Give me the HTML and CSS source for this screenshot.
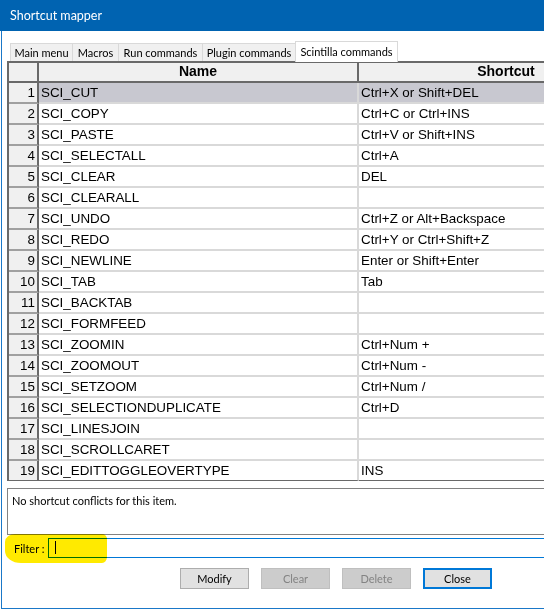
FILE: index.html
```html
<!DOCTYPE html>
<html>
<head>
<meta charset="utf-8">
<link rel="stylesheet" href="styles.css">
</head>
<body>
<div class="window">
  <div class="titlebar">Shortcut mapper</div>
  <div class="client">
    <div class="tabs">
      <div class="tab t1">Main menu</div>
      <div class="tab t2">Macros</div>
      <div class="tab t3">Run commands</div>
      <div class="tab t4">Plugin commands</div>
      <div class="tab t5 active">Scintilla commands</div>
    </div>
    <div class="grid">
      <div class="row head">
        <div class="cell num"></div>
        <div class="cell name">Name</div>
        <div class="cell sc">Shortcut</div>
      </div>
      <div class="row sel"><div class="cell num">1</div><div class="cell name">SCI_CUT</div><div class="cell sc">Ctrl+X or Shift+DEL</div></div>
      <div class="row"><div class="cell num">2</div><div class="cell name">SCI_COPY</div><div class="cell sc">Ctrl+C or Ctrl+INS</div></div>
      <div class="row"><div class="cell num">3</div><div class="cell name">SCI_PASTE</div><div class="cell sc">Ctrl+V or Shift+INS</div></div>
      <div class="row"><div class="cell num">4</div><div class="cell name">SCI_SELECTALL</div><div class="cell sc">Ctrl+A</div></div>
      <div class="row"><div class="cell num">5</div><div class="cell name">SCI_CLEAR</div><div class="cell sc">DEL</div></div>
      <div class="row"><div class="cell num">6</div><div class="cell name">SCI_CLEARALL</div><div class="cell sc"></div></div>
      <div class="row"><div class="cell num">7</div><div class="cell name">SCI_UNDO</div><div class="cell sc">Ctrl+Z or Alt+Backspace</div></div>
      <div class="row"><div class="cell num">8</div><div class="cell name">SCI_REDO</div><div class="cell sc">Ctrl+Y or Ctrl+Shift+Z</div></div>
      <div class="row"><div class="cell num">9</div><div class="cell name">SCI_NEWLINE</div><div class="cell sc">Enter or Shift+Enter</div></div>
      <div class="row"><div class="cell num">10</div><div class="cell name">SCI_TAB</div><div class="cell sc">Tab</div></div>
      <div class="row"><div class="cell num">11</div><div class="cell name">SCI_BACKTAB</div><div class="cell sc"></div></div>
      <div class="row"><div class="cell num">12</div><div class="cell name">SCI_FORMFEED</div><div class="cell sc"></div></div>
      <div class="row"><div class="cell num">13</div><div class="cell name">SCI_ZOOMIN</div><div class="cell sc">Ctrl+Num +</div></div>
      <div class="row"><div class="cell num">14</div><div class="cell name">SCI_ZOOMOUT</div><div class="cell sc">Ctrl+Num -</div></div>
      <div class="row"><div class="cell num">15</div><div class="cell name">SCI_SETZOOM</div><div class="cell sc">Ctrl+Num /</div></div>
      <div class="row"><div class="cell num">16</div><div class="cell name">SCI_SELECTIONDUPLICATE</div><div class="cell sc">Ctrl+D</div></div>
      <div class="row"><div class="cell num">17</div><div class="cell name">SCI_LINESJOIN</div><div class="cell sc"></div></div>
      <div class="row"><div class="cell num">18</div><div class="cell name">SCI_SCROLLCARET</div><div class="cell sc"></div></div>
      <div class="row last"><div class="cell num">19</div><div class="cell name">SCI_EDITTOGGLEOVERTYPE</div><div class="cell sc">INS</div></div>
    </div>
    <div class="conflicts">No shortcut conflicts for this item.</div>
    <div class="filter-row">
      <div class="filter-label">Filter :</div>
      <div class="filter-input"><span class="caret"></span></div>
    </div>
    <div class="buttons">
      <div class="btn">Modify</div>
      <div class="btn disabled">Clear</div>
      <div class="btn disabled">Delete</div>
      <div class="btn default">Close</div>
    </div>
  </div>
  <div class="highlight"></div>
</div>
</body>
</html>
```

FILE: styles.css
```css
html, body {
  margin: 0;
  padding: 0;
}
body {
  width: 544px;
  height: 609px;
  overflow: hidden;
  background: #ffffff;
}
.window {
  position: relative;
  width: 544px;
  height: 609px;
  overflow: hidden;
  font-family: Lato, "Noto Sans", sans-serif;
}
.titlebar {
  height: 31px;
  background: #0063b1;
  color: #ffffff;
  font-size: 12.5px;
  line-height: 31px;
  padding-left: 10px;
  box-sizing: border-box;
}
.client {
  box-sizing: border-box;
  height: 578px;
  margin-left: 1px;
  border-left: 1px solid #1a78c8;
  border-bottom: 1px solid #1a78c8;
  padding-top: 10px;
  overflow: hidden;
  background: #ffffff;
}
.tabs {
  display: flex;
  align-items: flex-end;
  height: 20px;
  margin-left: 8px;
  font-size: 11px;
  color: #000;
}
.tab {
  box-sizing: border-box;
  height: 18px;
  line-height: 17px;
  background: #f0f0f0;
  border: 1px solid #d9d9d9;
  border-bottom: none;
  margin-right: -1px;
  text-align: center;
  white-space: nowrap;
}
.t1 { width: 63px; }
.t2 { width: 47px; }
.t3 { width: 85px; }
.t4 { width: 94px; }
.t5 { width: 103px; }
.tab.active {
  height: 21px;
  line-height: 19px;
  background: #ffffff;
  margin-bottom: -1px;
  position: relative;
  z-index: 2;
}
.grid {
  margin-left: 5px;
  width: 660px;
  border-left: 2px solid #696969;
  border-top: 2px solid #696969;
  font-family: "Liberation Sans", Arial, sans-serif;
  font-size: 13.4px;
  color: #000;
  position: relative;
  z-index: 1;
}
.row {
  display: flex;
  height: 21px;
}
.cell {
  box-sizing: border-box;
  height: 100%;
  border-bottom: 2px solid #d9d9d9;
  border-right: 2px solid #d9d9d9;
  line-height: 19px;
  padding-left: 2px;
  white-space: nowrap;
  overflow: hidden;
}
.num {
  width: 30px;
  background: #f0f0f0;
  border-right-color: #696969;
  border-bottom-color: #a0a0a0;
  text-align: right;
  padding-left: 0;
  padding-right: 2px;
}
.name { width: 320px; }
.sc { width: 296px; padding-left: 2px; }
.row.sel .name, .row.sel .sc {
  background: #c8c8d0;
}
.row.head {
  height: 20px;
}
.row.head .cell {
  background: #f0f0f0;
  border-bottom: 2px solid #696969;
  border-right-color: #696969;
  font-weight: bold;
  font-size: 14px;
  text-align: center;
  line-height: 17px;
  padding: 0;
}
.row.last {
  height: 20px;
}
.row.last .cell {
  border-bottom: 1px solid #696969;
}
.conflicts {
  box-sizing: border-box;
  margin-top: 7px;
  margin-left: 5px;
  width: 600px;
  height: 47px;
  border: 1px solid #828282;
  padding: 5px 0 0 4px;
  font-size: 11px;
  line-height: 13px;
  color: #000;
}
.filter-row {
  display: flex;
  align-items: center;
  margin-top: 3px;
  height: 20px;
}
.filter-label {
  flex-shrink: 0;
  width: 34px;
  padding-left: 12px;
  font-size: 11px;
  color: #000;
  white-space: nowrap;
}
.filter-input {
  flex-shrink: 0;
  box-sizing: border-box;
  width: 560px;
  height: 20px;
  border: 1px solid #0078d7;
  background: #ffffff;
  padding-left: 6px;
  padding-top: 2px;
}
.caret {
  display: block;
  width: 1px;
  height: 13px;
  background: #000;
}
.buttons {
  display: flex;
  gap: 12px;
  margin-top: 10px;
  padding-left: 178px;
}
.btn {
  box-sizing: border-box;
  width: 69px;
  height: 21px;
  background: #e1e1e1;
  border: 1px solid #adadad;
  font-size: 11px;
  line-height: 19px;
  text-align: center;
  color: #000;
}
.btn.disabled {
  background: #cccccc;
  border-color: #bfbfbf;
  color: #838383;
}
.btn.default {
  border: 2px solid #0078d7;
  line-height: 17px;
}
.highlight {
  position: absolute;
  left: 5px;
  top: 534px;
  width: 102px;
  height: 29px;
  background: #ffea00;
  mix-blend-mode: multiply;
  border-radius: 10px 5px 5px 16px / 8px 5px 6px 12px;
  z-index: 5;
}
```
